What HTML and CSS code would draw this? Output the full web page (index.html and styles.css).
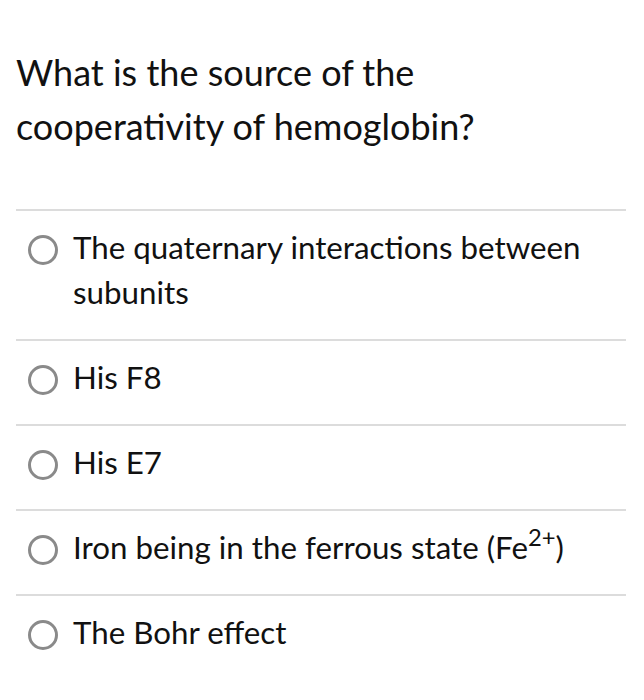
FILE: index.html
```html
<!DOCTYPE html>
<html lang="en">
<head>
<meta charset="utf-8">
<title>Question</title>
<link rel="stylesheet" href="styles.css">
</head>
<body>
<div class="quiz">
  <h1 class="question">What is the source of the cooperativity of hemoglobin?</h1>
  <ul class="options">
    <li class="option"><span class="radio"></span><span class="label">The quaternary interactions between subunits</span></li>
    <li class="option"><span class="radio"></span><span class="label">His F8</span></li>
    <li class="option"><span class="radio"></span><span class="label">His E7</span></li>
    <li class="option"><span class="radio"></span><span class="label">Iron being in the ferrous state (Fe<sup class="sup">2+</sup>)</span></li>
    <li class="option"><span class="radio"></span><span class="label">The Bohr effect</span></li>
  </ul>
</div>
</body>
</html>
```

FILE: styles.css
```css
html, body {
  margin: 0;
  padding: 0;
  background: #fff;
}
body {
  font-family: Lato, "Open Sans", sans-serif;
  color: #111;
}
.quiz {
  padding: 45px 18px 0 16px;
}
.question {
  margin: 0 0 56px 0;
  font-size: 36px;
  font-weight: 400;
  line-height: 54px;
  width: 490px;
}
.options {
  list-style: none;
  margin: 0;
  padding: 0;
}
.option {
  display: flex;
  align-items: flex-start;
  border-top: 2px solid #dcdcdc;
  padding: 14px 0 24px 12px;
  font-size: 31.3px;
  line-height: 45px;
}
.radio {
  flex: none;
  width: 24px;
  height: 24px;
  border: 3px solid #8a8a8a;
  border-radius: 50%;
  margin-top: 10px;
  margin-right: 15px;
}
.label {
  flex: 1;
}
.sup {
  font-size: 0.76em;
  line-height: 0;
  vertical-align: 0.55em;
}
```
